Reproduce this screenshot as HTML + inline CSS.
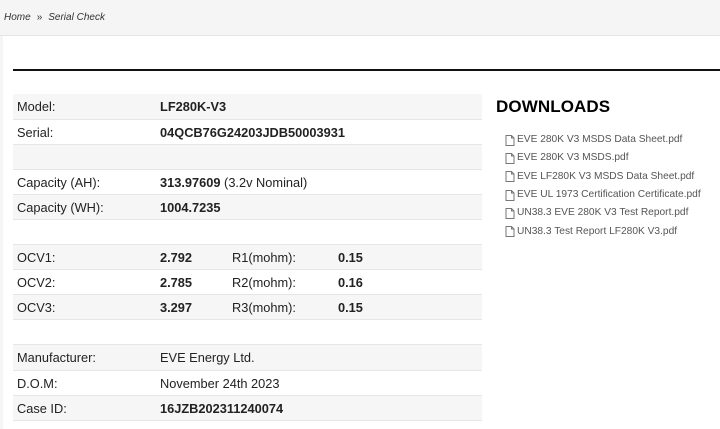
<!DOCTYPE html>
<html><head><meta charset="utf-8"><style>
*{margin:0;padding:0;box-sizing:border-box}
body{width:720px;height:429px;overflow:hidden;background:#fff;font-family:"Liberation Sans",sans-serif;color:#222;position:relative}
.top{position:absolute;left:0;top:0;width:720px;height:36px;background:#f5f5f5;border-bottom:1px solid #e4e4e4}
.bc{position:absolute;left:4px;top:12px;font-size:10px;font-style:italic;color:#333}
.bc span{margin:0 6px;font-style:normal;font-size:10px}
.side{position:absolute;left:0;top:36px;width:3px;height:393px;background:#f5f5f5}
.hr{position:absolute;left:13px;top:69px;width:707px;height:2px;background:#111}
table{position:absolute;left:13px;top:94px;width:469px;border-collapse:collapse;font-size:12.8px}
td{height:25.1px;padding:1px 0 0 4px;border-bottom:1px solid #e6e6e6;white-space:nowrap}
tr:nth-child(odd){background:#f6f6f6}
td.b{font-weight:bold}
h2{position:absolute;left:496px;top:97px;font-size:17px;font-weight:900;color:#000;letter-spacing:.1px}
ul{position:absolute;left:505px;top:131px;list-style:none;font-size:10.2px;color:#555}
li{height:18.3px;line-height:14px;display:flex;align-items:center}
li svg{margin-right:2px}
</style></head><body>
<div class="top"><div class="bc">Home<span>»</span>Serial Check</div></div>
<div class="side"></div>
<div class="hr"></div>
<table>
<col style="width:143px"><col style="width:72px"><col style="width:106px"><col>
<tr><td>Model:</td><td class="b" colspan="3">LF280K-V3</td></tr>
<tr><td>Serial:</td><td class="b" colspan="3">04QCB76G24203JDB50003931</td></tr>
<tr><td colspan="4"></td></tr>
<tr><td>Capacity (AH):</td><td colspan="3"><b>313.97609</b> (3.2v Nominal)</td></tr>
<tr><td>Capacity (WH):</td><td class="b" colspan="3">1004.7235</td></tr>
<tr><td colspan="4" style="background:#fff"></td></tr>
<tr><td>OCV1:</td><td class="b">2.792</td><td>R1(mohm):</td><td class="b">0.15</td></tr>
<tr><td>OCV2:</td><td class="b">2.785</td><td>R2(mohm):</td><td class="b">0.16</td></tr>
<tr><td>OCV3:</td><td class="b">3.297</td><td>R3(mohm):</td><td class="b">0.15</td></tr>
<tr><td colspan="4" style="background:#fff"></td></tr>
<tr><td>Manufacturer:</td><td colspan="3">EVE Energy Ltd.</td></tr>
<tr><td>D.O.M:</td><td colspan="3">November 24th 2023</td></tr>
<tr><td>Case ID:</td><td class="b" colspan="3">16JZB202311240074</td></tr>
</table>
<h2>DOWNLOADS</h2>
<ul>
<li><svg width="10" height="11" viewBox="0 0 10 11"><path d="M1 .5h5.5l2.5 2.5v7.5H1z M6.5 .5v2.5H9" fill="none" stroke="#777"/></svg>EVE 280K V3 MSDS Data Sheet.pdf</li>
<li><svg width="10" height="11" viewBox="0 0 10 11"><path d="M1 .5h5.5l2.5 2.5v7.5H1z M6.5 .5v2.5H9" fill="none" stroke="#777"/></svg>EVE 280K V3 MSDS.pdf</li>
<li><svg width="10" height="11" viewBox="0 0 10 11"><path d="M1 .5h5.5l2.5 2.5v7.5H1z M6.5 .5v2.5H9" fill="none" stroke="#777"/></svg>EVE LF280K V3 MSDS Data Sheet.pdf</li>
<li><svg width="10" height="11" viewBox="0 0 10 11"><path d="M1 .5h5.5l2.5 2.5v7.5H1z M6.5 .5v2.5H9" fill="none" stroke="#777"/></svg>EVE UL 1973 Certification Certificate.pdf</li>
<li><svg width="10" height="11" viewBox="0 0 10 11"><path d="M1 .5h5.5l2.5 2.5v7.5H1z M6.5 .5v2.5H9" fill="none" stroke="#777"/></svg>UN38.3 EVE 280K V3 Test Report.pdf</li>
<li><svg width="10" height="11" viewBox="0 0 10 11"><path d="M1 .5h5.5l2.5 2.5v7.5H1z M6.5 .5v2.5H9" fill="none" stroke="#777"/></svg>UN38.3 Test Report LF280K V3.pdf</li>
</ul>
</body></html>
